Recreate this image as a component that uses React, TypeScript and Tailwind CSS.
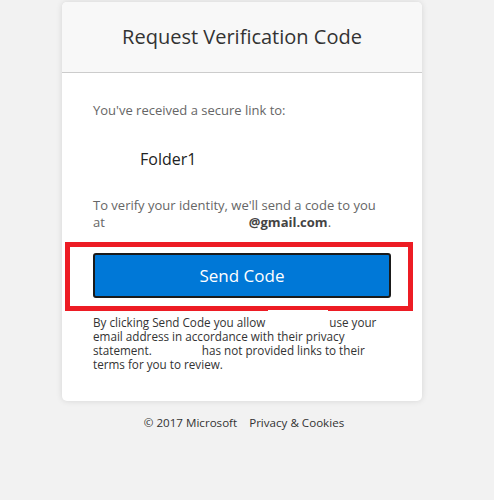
import React from 'react';

const App: React.FC = () => {
    return (
        <div
            className="min-h-[500px] w-full bg-[#f2f2f2] pt-[2px]"
            style={{ fontFamily: '"Open Sans", "Noto Sans", sans-serif' }}
        >
            {/* Card */}
            <div className="relative ml-[62px] w-[360px] rounded-[5px] bg-white shadow-[0_0_6px_rgba(0,0,0,0.12)]">
                {/* Header */}
                <div className="flex h-[71px] items-center justify-center rounded-t-[5px] border-b border-[#cccccc] bg-[#f8f8f8]">
                    <h1 className="text-[20px] font-normal text-[#333333]">Request Verification Code</h1>
                </div>

                {/* Body */}
                <div className="px-[31px] pb-[30px] pt-[28px]">
                    <p className="text-[13px] leading-[18px] text-[#666666]">You've received a secure link to:</p>
                    <p className="mt-[30px] pl-[47px] text-[16px] leading-[20px] text-[#222222]">Folder1</p>

                    <p className="mt-[28px] text-[13px] leading-[17px] text-[#666666]">
                        To verify your identity, we'll send a code to you
                        <br />
                        at
                        <span className="ml-[144px] font-bold text-[#444444]">@gmail.com</span>.
                    </p>

                    <button className="mt-[22px] flex h-[45px] w-full items-center justify-center rounded-[3px] border-2 border-[#1a1a1a] bg-[#0078d7] text-[17px] text-white">
                        Send Code
                    </button>

                    <div className="mt-[17px] text-[11.7px] leading-[14px] text-[#333333]">
                        <div className="h-[14px]">
                            By clicking Send Code you allow
                            <span className="ml-[64px]">use your</span>
                        </div>
                        <div className="h-[14px]">email address in accordance with their privacy</div>
                        <div className="h-[14px]">
                            statement.
                            <span className="ml-[50px]">has not provided links to their</span>
                        </div>
                        <div className="h-[14px]">terms for you to review.</div>
                    </div>
                </div>

                {/* Red highlight annotation */}
                <div className="pointer-events-none absolute left-[3px] top-[240px] h-[69px] w-[348px] border-[5px] border-[#ed1c24]" />
                {/* Redaction patch over annotation border */}
                <div className="pointer-events-none absolute left-[206px] top-[308px] h-[13px] w-[60px] bg-white" />
            </div>

            {/* Footer */}
            <div className="mt-[13px] flex justify-center gap-[12px] pr-[6px] text-[11.6px] text-[#333333]">
                <span>© 2017 Microsoft</span>
                <span>Privacy &amp; Cookies</span>
            </div>
        </div>
    );
};

export default App;
